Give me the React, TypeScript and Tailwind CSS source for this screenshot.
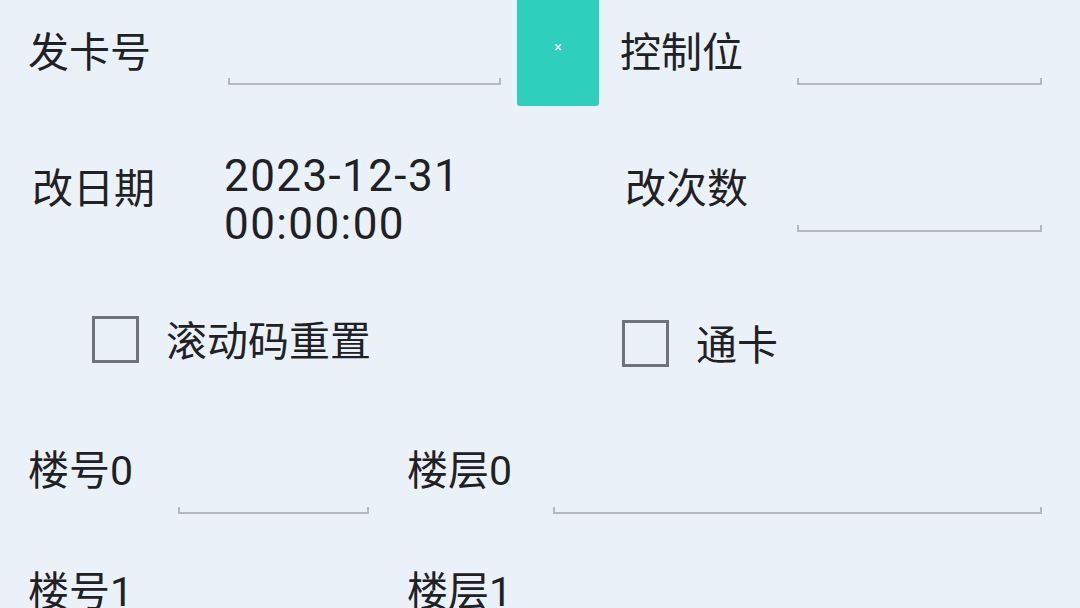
import { useState } from "react";

const font = { fontFamily: "Roboto, 'Noto Sans CJK SC', 'Noto Sans', sans-serif" };

// Android-style edit text: a bottom rule with short ticks at both ends
function Underline({ className = "" }: { className?: string }) {
  return <div className={`h-[7px] border-2 border-t-0 border-[#b4b9c0] ${className}`} />;
}

function Check({ checked, onToggle }: { checked: boolean; onToggle: () => void }) {
  return (
    <button
      onClick={onToggle}
      className="w-[47px] h-[47px] border-[3px] border-[#6f7379] bg-transparent flex items-center justify-center"
      aria-pressed={checked}
    >
      {checked && <span className="w-[25px] h-[25px] bg-[#2fcfbd]" />}
    </button>
  );
}

export default function App() {
  const [rolling, setRolling] = useState(false);
  const [master, setMaster] = useState(false);

  return (
    <div className="w-[1080px] h-[608px] overflow-hidden bg-[#ebf1f9] text-[#1f2124] text-[41px] leading-none" style={font}>
      {/* 发卡号 / 控制位 */}
      <div className="flex h-[106px]">
        <div className="w-[228px] pl-[28px] flex items-center">发卡号</div>
        <div className="w-[273px] flex flex-col justify-end pb-[21px]">
          <Underline />
        </div>
        <button className="ml-[16px] w-[82px] h-[106px] bg-[#2fcfbd] rounded-b-[3px] flex items-center justify-center text-white text-[14px] pb-[12px]">
          ×
        </button>
        <div className="ml-[21px] w-[177px] flex items-center">控制位</div>
        <div className="w-[245px] flex flex-col justify-end pb-[21px]">
          <Underline />
        </div>
      </div>

      {/* 改日期 / 改次数 */}
      <div className="flex h-[150px]">
        <div className="w-[224px] pl-[32px] flex items-center pt-[16px]">改日期</div>
        <div className="w-[401px] pt-[46px] text-[44px] leading-[48px] tracking-[1.4px]">
          <div>2023-12-31</div>
          <div>00:00:00</div>
        </div>
        <div className="w-[172px] flex items-center pt-[16px]">改次数</div>
        <div className="w-[245px] flex flex-col justify-end pb-[24px]">
          <Underline />
        </div>
      </div>

      {/* 复选项 */}
      <div className="flex h-[155px] pt-[60px]">
        <div className="w-[530px] pl-[92px] flex items-start gap-[27px]">
          <Check checked={rolling} onToggle={() => setRolling(!rolling)} />
          <span className="mt-[6px]">滚动码重置</span>
        </div>
        <div className="pl-[92px] pt-[4px] flex items-start gap-[27px]">
          <Check checked={master} onToggle={() => setMaster(!master)} />
          <span className="mt-[6px]">通卡</span>
        </div>
      </div>

      {/* 楼号 / 楼层 */}
      {[0, 1].map((i) => (
        <div key={i} className="flex h-[121px]">
          <div className="w-[178px] pl-[28px] flex items-center">楼号{i}</div>
          <div className="w-[191px] flex flex-col justify-end pb-[18px]">
            <Underline />
          </div>
          <div className="ml-[38px] w-[146px] flex items-center">楼层{i}</div>
          <div className="w-[489px] flex flex-col justify-end pb-[18px]">
            <Underline />
          </div>
        </div>
      ))}
    </div>
  );
}
